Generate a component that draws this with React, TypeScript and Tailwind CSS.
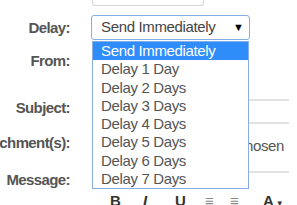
const items = [
  "Send Immediately",
  "Delay 1 Day",
  "Delay 2 Days",
  "Delay 3 Days",
  "Delay 4 Days",
  "Delay 5 Days",
  "Delay 6 Days",
  "Delay 7 Days",
];

function Label({ text }: { text: string }) {
  return (
    <div className="w-[70px] shrink-0 flex justify-end whitespace-nowrap text-[15px] leading-[18px] font-bold tracking-[-0.6px] text-[#555]">
      {text}
    </div>
  );
}

export default function App() {
  return (
    <div className="relative w-[297px] h-[205px] overflow-hidden bg-white font-['Liberation_Sans',Arial,sans-serif]">
      <div className="flex flex-col">
        {/* bottom of the field above */}
        <div className="h-[6px] ml-[92px] w-[112px] border border-t-0 border-[#d6d6d6] rounded-b-[3px]" />

        {/* Delay */}
        <div className="mt-[9px] h-[25px] flex items-center">
          <Label text="Delay:" />
          <div className="ml-[21px] w-[159px] h-[25px] border border-[#86ade6] rounded-[3px] bg-white flex items-center justify-between pl-[9px] pr-[5px]">
            <span className="text-[15px] tracking-[-0.35px] text-[#444]">Send Immediately</span>
            <span className="text-[11px] leading-none text-black">▼</span>
          </div>
        </div>

        {/* From */}
        <div className="mt-[8px] h-[25px] flex items-center">
          <Label text="From:" />
          <div className="ml-[22px] w-[140px] h-[25px] border border-[#d6d6d6] rounded-[3px]" />
        </div>

        {/* Subject */}
        <div className="mt-[26px] h-[25px] flex items-start">
          <Label text="Subject:" />
          <div className="ml-[22px] w-[197px] h-[25px] border-y-2 border-[#e2e2e2]" />
        </div>

        {/* Attachments */}
        <div className="mt-[10px] h-[20px] flex items-start">
          <Label text="Attachment(s):" />
          <div className="ml-[22px] w-[197px] flex justify-end items-center pr-[5px] pt-[3px] whitespace-nowrap">
            <span className="text-[15px] tracking-[-0.4px] leading-[18px] text-[#555]">No file chosen</span>
          </div>
        </div>

        {/* Message */}
        <div className="mt-[17px] flex items-start">
          <Label text="Message:" />
          <div className="ml-[22px] w-[197px] border-t-2 border-[#e2e2e2]">
            <div className="h-[20px]" />
            <div className="flex items-start pl-[18px] text-[15px] font-bold text-[#333] leading-[16px]">
              <span className="w-[33px]">B</span>
              <span className="w-[32px] italic">I</span>
              <span className="w-[30px] underline">U</span>
              <span className="w-[25px] font-normal text-[#888]">≡</span>
              <span className="w-[33px] font-normal text-[#888]">≡</span>
              <span>A<span className="text-[8px] font-normal ml-[2px]">▼</span></span>
            </div>
          </div>
        </div>
      </div>

      {/* open dropdown list */}
      <div className="absolute left-[92px] top-[41px] w-[157px] border border-[#86ade6] bg-white">
        {items.map((item, i) => (
          <div
            key={item}
            className={`h-[18.3px] flex items-center pl-[8px] text-[15px] tracking-[-0.35px] whitespace-nowrap ${
              i === 0 ? "bg-[#2f8df9] text-white" : "text-[#555]"
            }`}
          >
            {item}
          </div>
        ))}
      </div>
    </div>
  );
}
